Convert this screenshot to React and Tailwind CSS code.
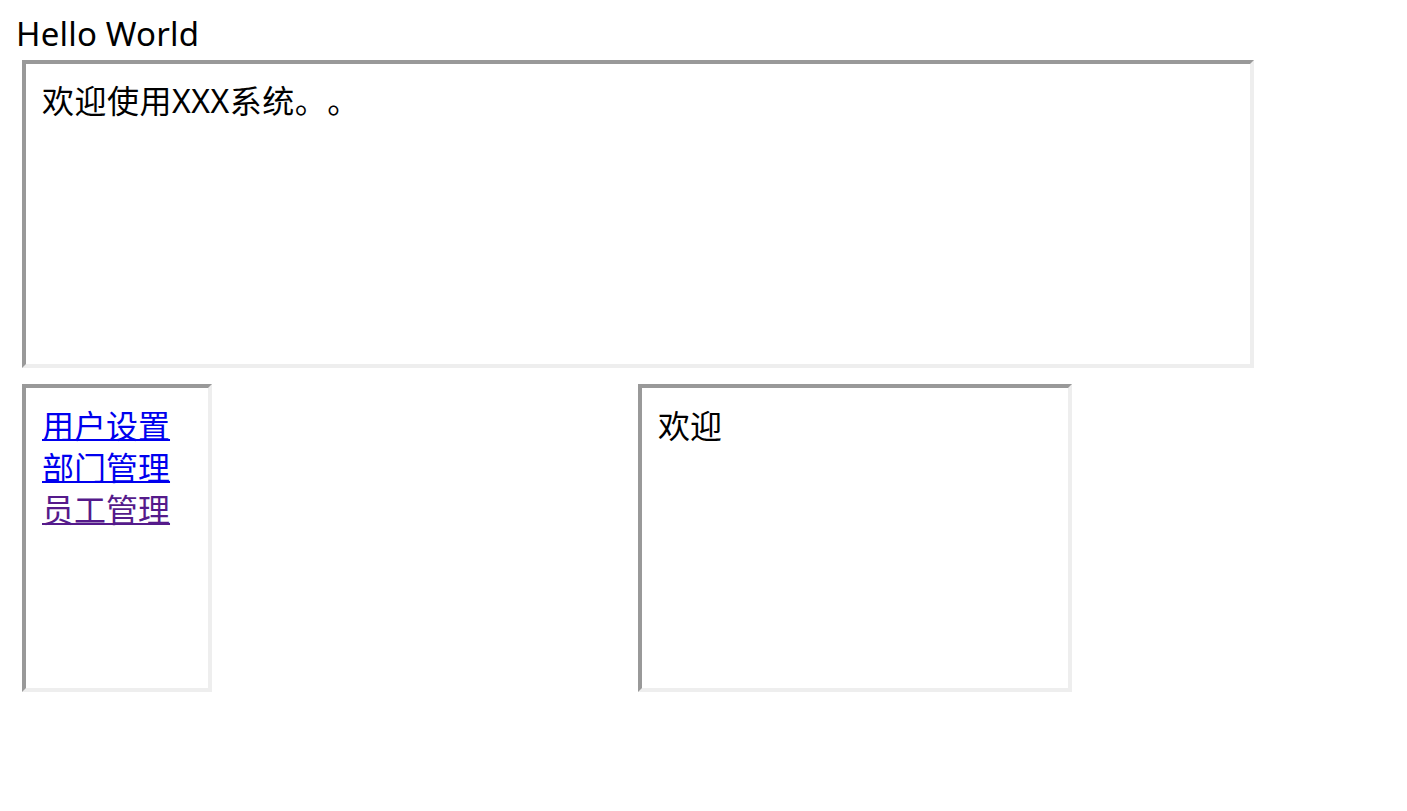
export default function App() {
  const frame =
    'box-border border-4 border-t-[#999999] border-l-[#999999] border-r-[#eeeeee] border-b-[#eeeeee] bg-white p-4 text-black';

  return (
    <div className="min-h-[811px] bg-white pt-[13px] font-['Noto_Sans','Noto_Sans_CJK_SC',sans-serif] text-[32px] leading-[42px] text-black [text-spacing-trim:space-all]">
      {/* page title */}
      <div className="pl-[16px] text-[33px] tracking-[0.2px]">Hello World</div>

      {/* frames */}
      <div className="mt-[5px] flex flex-col gap-4 pl-[22px]">
        <div className={`${frame} h-[308px] w-[1232px]`}>
          <span className="tracking-[0.5px]">欢迎使用XXX系统。。</span>
        </div>

        <div className="flex">
          <div className={`${frame} h-[308px] w-[190px]`}>
            <div className="flex flex-col pt-[1px]">
              <a href="#" className="w-fit text-[#0000ee] underline decoration-2">
                用户设置
              </a>
              <a href="#" className="w-fit text-[#0000ee] underline decoration-2">
                部门管理
              </a>
              <a href="#" className="w-fit text-[#551a8b] underline decoration-2">
                员工管理
              </a>
            </div>
          </div>

          <div className={`${frame} ml-[426px] h-[308px] w-[434px]`}>
            <div className="pt-[1px]">欢迎</div>
          </div>
        </div>
      </div>
    </div>
  );
}
